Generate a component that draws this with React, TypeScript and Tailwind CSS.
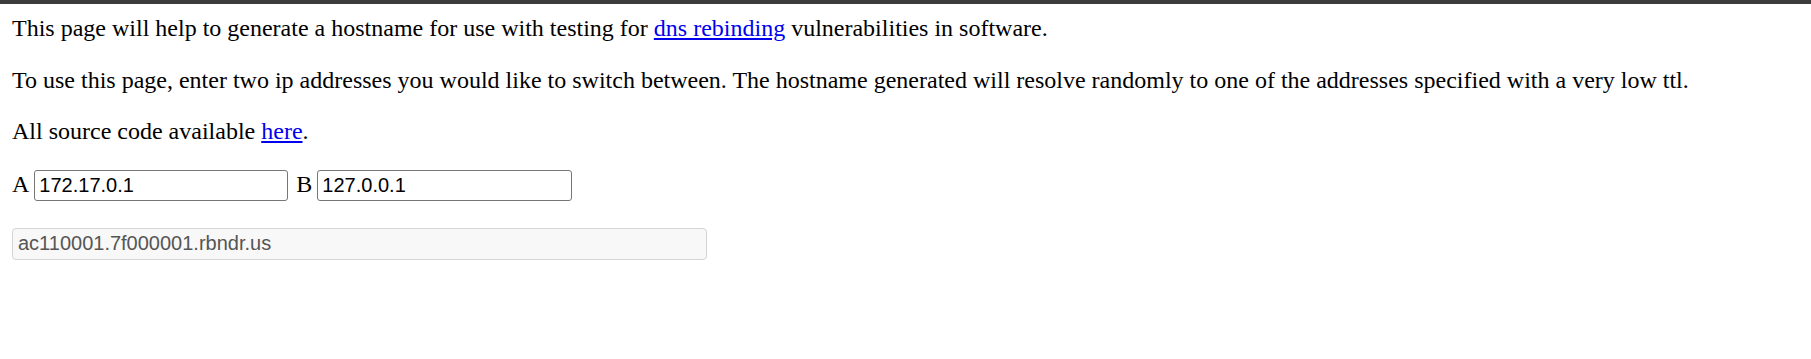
export default function App() {
  return (
    <div className="min-h-screen bg-white">
      <div className="h-[4px] bg-[#3c3c3c]" />
      <div className="px-[12px] pt-[11px] font-['Liberation_Serif',serif] text-[24px] leading-[27.6px] text-black">
        <p>
          This page will help to generate a hostname for use with testing for{" "}
          <a href="#" className="text-[#0000ee] underline">dns rebinding</a> vulnerabilities in software.
        </p>
        <p className="mt-[24px]">
          To use this page, enter two ip addresses you would like to switch between. The hostname generated will resolve randomly to one of the addresses specified with a very low ttl.
        </p>
        <p className="mt-[24px]">
          All source code available <a href="#" className="text-[#0000ee] underline">here</a>.
        </p>
        <div className="mt-[24px] flex items-center gap-[5px]">
          <span>A</span>
          <input
            defaultValue="172.17.0.1"
            className="h-[31px] w-[254px] rounded-[3px] border-[1.5px] border-[#767676] px-[4px] font-['Liberation_Sans',Arial,sans-serif] text-[20px] text-black outline-none"
          />
          <span className="ml-[3px]">B</span>
          <input
            defaultValue="127.0.0.1"
            className="h-[31px] w-[255px] rounded-[3px] border-[1.5px] border-[#767676] px-[4px] font-['Liberation_Sans',Arial,sans-serif] text-[20px] text-black outline-none"
          />
        </div>
        <div className="mt-[27px] flex h-[32px] w-[695px] items-center rounded-[4px] border-[1.5px] border-[#d4d4d4] bg-[#f8f8f8] px-[5px] font-['Liberation_Sans',Arial,sans-serif] text-[20px] text-[#555555]">
          ac110001.7f000001.rbndr.us
        </div>
      </div>
    </div>
  );
}
